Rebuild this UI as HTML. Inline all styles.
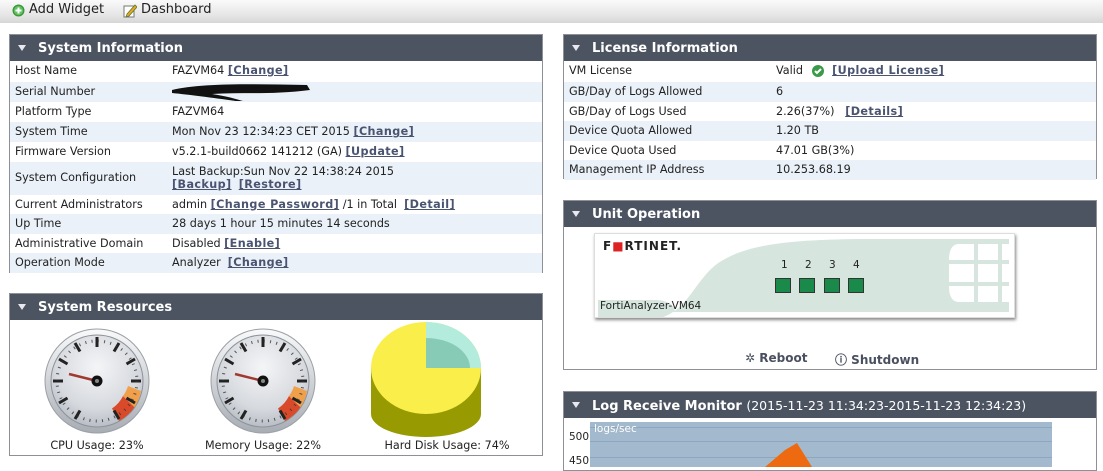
<!DOCTYPE html>
<html><head><meta charset="utf-8"><style>
*{margin:0;padding:0;box-sizing:border-box}
body{width:1103px;height:465px;overflow:hidden;background:#fff;font-family:"DejaVu Sans",Verdana,sans-serif;font-size:11.2px;color:#222;position:relative}
.abs{position:absolute}
.tb{left:0;top:0;width:1103px;height:23px;background:linear-gradient(#fafafa,#e4e4e4 70%,#d6d6d6);}
.tb span{position:absolute;top:2px;font-size:13px;color:#222;font-family:"DejaVu Sans",sans-serif}
.panel{position:absolute;border:1px solid #8d9097;background:#fff}
.hd{height:26px;background:#4c5462;color:#fff;font-weight:bold;font-size:13px;line-height:27px;padding-left:28px;position:relative}
.hd:before{content:"";position:absolute;left:8px;top:10px;border-left:4px solid transparent;border-right:4px solid transparent;border-top:6px solid #e8e8ee}
.hd .n{font-weight:normal;font-size:12.5px}
.row{position:absolute;left:0;right:0;height:20px;line-height:20px}
.row.a{background:#eaf1f9}
.row .k{position:absolute;left:5px}
.row .v{position:absolute;left:162px;white-space:nowrap}
a{color:#4a5470;font-weight:bold;text-decoration:underline;letter-spacing:.4px}
</style></head><body>
<div class="abs tb">
<svg class="abs" style="left:12px;top:4px" width="13" height="13"><circle cx="6.5" cy="6.5" r="6" fill="#3a9a3a"/><circle cx="6.5" cy="6.5" r="4.6" fill="#63c063"/><path d="M6.5 3.5v6M3.5 6.5h6" stroke="#fff" stroke-width="2"/></svg>
<span style="left:29px">Add Widget</span>
<svg class="abs" style="left:123px;top:3px" width="14" height="15"><rect x="1" y="3" width="10" height="11" fill="#fff" stroke="#777"/><path d="M4 11l8-9 2 2-8 9-3 1z" fill="#e8a820" stroke="#5a7a2a" stroke-width=".8"/></svg>
<span style="left:141px">Dashboard</span>
</div>

<div class="panel" style="left:9px;top:34px;width:534px;height:239px">
<div class="hd">System Information</div>
<div class="row" style="top:26px;height:21px"><span class="k">Host Name</span><span class="v">FAZVM64 <a>[Change]</a></span></div>
<div class="row a" style="top:47px"><span class="k">Serial Number</span><span class="v"><svg width="140" height="20" style="vertical-align:middle;margin-top:-3px"><path d="M0 9 C30 2 80 3 135 4 L138 9 C100 14 70 11 40 13 C60 16 70 20 78 22 C50 18 20 14 0 12Z" fill="#111"/></svg></span></div>
<div class="row" style="top:67px"><span class="k">Platform Type</span><span class="v">FAZVM64</span></div>
<div class="row a" style="top:87px"><span class="k">System Time</span><span class="v">Mon Nov 23 12:34:23 CET 2015 <a>[Change]</a></span></div>
<div class="row" style="top:107px"><span class="k">Firmware Version</span><span class="v">v5.2.1-build0662 141212 (GA) <a>[Update]</a></span></div>
<div class="row a" style="top:127px;height:33px"><span class="k" style="top:6px">System Configuration</span><span class="v" style="line-height:13px;top:3px">Last Backup:Sun Nov 22 14:38:24 2015<br><a>[Backup]</a>&nbsp; <a>[Restore]</a></span></div>
<div class="row" style="top:160px"><span class="k">Current Administrators</span><span class="v">admin <a>[Change Password]</a> /1 in Total &nbsp;<a>[Detail]</a></span></div>
<div class="row a" style="top:179px"><span class="k">Up Time</span><span class="v">28 days 1 hour 15 minutes 14 seconds</span></div>
<div class="row" style="top:199px"><span class="k">Administrative Domain</span><span class="v">Disabled <a>[Enable]</a></span></div>
<div class="row a" style="top:218px"><span class="k">Operation Mode</span><span class="v">Analyzer &nbsp;<a>[Change]</a></span></div>
</div>

<div class="panel" style="left:9px;top:293px;width:534px;height:163px">
<div class="hd">System Resources</div>
</div>
<svg class="abs" style="left:0;top:320px" width="543" height="135">
<defs>
<radialGradient id="dial" cx="50%" cy="35%" r="65%"><stop offset="0" stop-color="#f4f5f7"/><stop offset=".7" stop-color="#d6d9de"/><stop offset="1" stop-color="#b9bec6"/></radialGradient>
<linearGradient id="ring" x1="0" y1="0" x2="0" y2="1"><stop offset="0" stop-color="#fafafa"/><stop offset="1" stop-color="#a8adb4"/></linearGradient>
<g id="gauge">
<circle r="52" fill="url(#ring)" stroke="#9aa0a8"/>
<circle r="46" fill="url(#dial)" stroke="#8c929a"/>
<path d="M 37.5 26.3 A 46 46 0 0 1 22 40 L 15 27.5 A 32 32 0 0 0 26 15z" fill="#d94a2a"/>
<path d="M 44 10 A 46 46 0 0 1 37.5 26.3 L 26 15 A 32 32 0 0 0 31 5z" fill="#f0a04a"/>
<g stroke="#222" stroke-width="3">
<line x1="-44" y1="0" x2="-34" y2="0"/><line x1="44" y1="0" x2="34" y2="0"/><line x1="0" y1="-44" x2="0" y2="-34"/>
<line x1="-38" y1="-22" x2="-29.5" y2="-17"/><line x1="38" y1="-22" x2="29.5" y2="-17"/>
<line x1="-22" y1="-38" x2="-17" y2="-29.5"/><line x1="22" y1="-38" x2="17" y2="-29.5"/>
<line x1="-38" y1="22" x2="-29.5" y2="17"/><line x1="38" y1="22" x2="29.5" y2="17"/>
<line x1="-22" y1="38" x2="-17" y2="29.5"/><line x1="22" y1="38" x2="17" y2="29.5"/>
</g>
<circle r="40" fill="none" stroke="#333" stroke-width="3" stroke-dasharray="1 5.3" opacity=".8"/>
<path d="M0 0 L-28 -7" stroke="#a03a30" stroke-width="2.5"/>
<circle r="5.5" fill="#111"/><circle r="2" fill="#888"/>
</g>
</defs>
<use href="#gauge" x="97" y="61"/>
<use href="#gauge" x="263" y="61"/>
<path d="M371 48 L371 94 A55 23 0 0 0 481 94 L481 48z" fill="#979a00"/>
<ellipse cx="426" cy="48" rx="55" ry="46" fill="#f9ee4a"/>
<path d="M426 48 L426 2 A55 46 0 0 1 481 48z" fill="#b3ecdc"/>
<path d="M426 48 L426 18 A44 30 0 0 1 470 48z" fill="#87cbb7"/>
<text x="97" y="129" font-size="11.2" text-anchor="middle" fill="#222" font-family="DejaVu Sans,sans-serif">CPU Usage: 23%</text>
<text x="263" y="129" font-size="11.2" text-anchor="middle" fill="#222" font-family="DejaVu Sans,sans-serif">Memory Usage: 22%</text>
<text x="447" y="129" font-size="11.2" text-anchor="middle" fill="#222" font-family="DejaVu Sans,sans-serif">Hard Disk Usage: 74%</text>
</svg>

<div class="panel" style="left:563px;top:34px;width:534px;height:145px">
<div class="hd">License Information</div>
<div class="row" style="top:26px;height:21px"><span class="k">VM License</span><span class="v" style="left:212px">Valid <svg width="14" height="14" style="vertical-align:middle;margin:0 4px"><circle cx="7" cy="7" r="6" fill="#3a9a4a"/><path d="M4 7l2 2 4-4" stroke="#fff" stroke-width="2" fill="none"/></svg> <a>[Upload License]</a></span></div>
<div class="row a" style="top:47px"><span class="k">GB/Day of Logs Allowed</span><span class="v" style="left:212px">6</span></div>
<div class="row" style="top:67px"><span class="k">GB/Day of Logs Used</span><span class="v" style="left:212px">2.26(37%) &nbsp;&nbsp;<a>[Details]</a></span></div>
<div class="row a" style="top:86px"><span class="k">Device Quota Allowed</span><span class="v" style="left:212px">1.20 TB</span></div>
<div class="row" style="top:106px"><span class="k">Device Quota Used</span><span class="v" style="left:212px">47.01 GB(3%)</span></div>
<div class="row a" style="top:125px"><span class="k">Management IP Address</span><span class="v" style="left:212px">10.253.68.19</span></div>
</div>

<div class="panel" style="left:563px;top:200px;width:534px;height:170px">
<div class="hd">Unit Operation</div>
</div>
<div class="abs" style="left:594px;top:233px;width:421px;height:85px;background:#fff;box-shadow:1px 2px 3px #888;border:1px solid #ddd;overflow:hidden">
<svg class="abs" style="left:0;top:0" width="421" height="85"><path d="M60 85 C95 80 100 40 130 25 C160 8 210 6 260 5 L414 5 L414 78 L3 78 L3 85z" fill="#d6e6df"/>
<path d="M3 66 L60 66 C70 66 80 70 80 78 L3 78z" fill="#d6e6df"/>
<g fill="#fff"><path d="M364 10 H379 V26 H354 C354 16 357 10 364 10z"/><rect x="383" y="10" width="20" height="16"/><rect x="407" y="10" width="7" height="16"/>
<rect x="354" y="30" width="25" height="18"/><rect x="383" y="30" width="20" height="18"/><rect x="407" y="30" width="7" height="18"/>
<path d="M354 52 H379 V68 H364 C357 68 354 62 354 52z"/><rect x="383" y="52" width="20" height="16"/><rect x="407" y="52" width="7" height="16"/></g>
</svg>
<div class="abs" style="left:8px;top:5px;font:bold 12px 'DejaVu Sans',sans-serif;color:#222;letter-spacing:1px">F<span style="color:#d22">■</span>RTINET.</div>
<div class="abs" style="left:186px;top:25px;font-size:10.5px;word-spacing:14px">1 2 3 4</div>
<div class="abs" style="left:180px;top:44px;width:16px;height:15px;background:#1a8a4a;border:1px solid #333"></div>
<div class="abs" style="left:204px;top:44px;width:16px;height:15px;background:#1a8a4a;border:1px solid #333"></div>
<div class="abs" style="left:229px;top:44px;width:16px;height:15px;background:#1a8a4a;border:1px solid #333"></div>
<div class="abs" style="left:253px;top:44px;width:16px;height:15px;background:#1a8a4a;border:1px solid #333"></div>
<div class="abs" style="left:5px;top:66px;font-size:10.5px">FortiAnalyzer-VM64</div>
</div>
<div class="abs" style="left:745px;top:351px;font-weight:bold;font-size:12px;color:#4a5060">✲ Reboot</div>
<div class="abs" style="left:835px;top:351px;font-weight:bold;font-size:12px;color:#4a5060">ⓘ Shutdown</div>

<div class="panel" style="left:563px;top:391px;width:534px;height:80px">
<div class="hd">Log Receive Monitor <span class="n">(2015-11-23 11:34:23-2015-11-23 12:34:23)</span></div>
</div>
<div class="abs" style="left:590px;top:422px;width:462px;height:45px;background:#a3b9cd">
<div class="abs" style="left:0;right:0;top:5px;border-top:1px solid #8ea6bf"></div>
<div class="abs" style="left:0;right:0;top:19px;border-top:1px solid #8ea6bf"></div>
<div class="abs" style="left:0;right:0;top:35px;border-top:1px solid #8ea6bf"></div>
<div class="abs" style="left:4px;top:1px;color:#fff;font-size:10.5px">logs/sec</div>
<svg class="abs" style="left:0;top:0" width="462" height="45"><path d="M175 45 L195 28 L207 21 L222 45z" fill="#ee6a10"/></svg>
</div>
<div class="abs" style="left:569px;top:431px;font-size:10.5px">500</div>
<div class="abs" style="left:569px;top:455px;font-size:10.5px">450</div>
</body></html>
